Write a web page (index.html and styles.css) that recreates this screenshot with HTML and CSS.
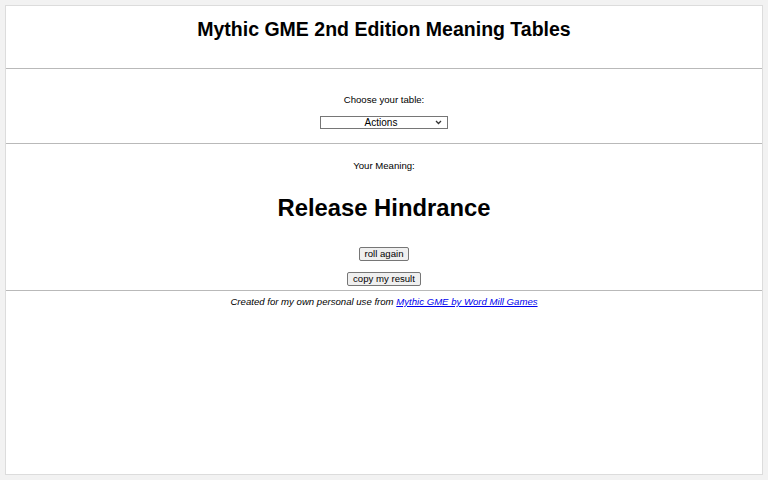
FILE: index.html
```html
<!DOCTYPE html>
<html>
<head>
<meta charset="UTF-8">
<title>Mythic GME Meaning Tables</title>
<link rel="stylesheet" href="styles.css">
</head>
<body>
<div id="wrap">
	<!-- 제목 -->
	<div class="head">
		<h1>Mythic GME 2nd Edition Meaning Tables</h1>
	</div>

	<!-- 테이블 선택 -->
	<div class="pick">
		<p class="small">Choose your table:</p>
		<select id="table">
			<option>Actions</option>
			<option>Descriptions</option>
			<option>Characters</option>
			<option>Locations</option>
		</select>
	</div>

	<!-- 결과 -->
	<div class="result">
		<p class="small">Your Meaning:</p>
		<h2 id="meaning">Release Hindrance</h2>
		<button type="button" class="stbtn">roll again</button>
		<button type="button" class="stbtn">copy my result</button>
	</div>

	<div class="foot">
		Created for my own personal use from <a href="#">Mythic GME by Word Mill Games</a>
	</div>
</div>
</body>
</html>
```

FILE: styles.css
```css
html{
	background: #f2f2f2;
}
body{
	margin: 5px;
	font-family: "Liberation Sans", Arial, sans-serif;
	color: black;
}

#wrap{
	background: white;
	border: 1px solid #dcdcdc;
	height: 468px;
	text-align: center;
}

.head{
	height: 61px;
	border-bottom: 1px solid #b9b9b9;
	padding-top: 1px;
}
h1{
	font-size: 19.5px;
	margin: 11px 0 0 0;
}

.pick{
	height: 73px;
	border-bottom: 1px solid #b9b9b9;
	padding-top: 1px;
}
.small{
	font-size: 9.6px;
	margin: 24px 0 7px 0;
}
#table{
	-webkit-appearance: none;
	appearance: none;
	width: 128px;
	height: 13px;
	font-family: "Liberation Sans", Arial, sans-serif;
	font-size: 10px;
	line-height: 11px;
	padding: 0 6px 0 0;
	text-align: center;
	text-align-last: center;
	color: black;
	border: 1px solid #767676;
	border-radius: 0;
	background: white url("data:image/svg+xml,%3Csvg xmlns='http://www.w3.org/2000/svg' width='7' height='5'%3E%3Cpath d='M1 1l2.5 2.5L6 1' fill='none' stroke='%23333' stroke-width='1.3'/%3E%3C/svg%3E") no-repeat right 5px center;
}

.result{
	height: 145px;
	border-bottom: 1px solid #b9b9b9;
	padding-top: 1px;
}
.result .small{
	margin: 15px 0 0 0;
}
h2{
	font-size: 23.8px;
	margin: 23px 0 25px 0;
}
.stbtn{
	display: block;
	margin: 0 auto 11px auto;
	font-family: "Liberation Sans", Arial, sans-serif;
	font-size: 9.6px;
	line-height: 10px;
	padding: 1px 5px;
	border: 1px solid #767676;
	border-radius: 2px;
	background: #efefef;
	cursor: pointer;
}

.foot{
	font-size: 9.6px;
	font-style: italic;
	padding-top: 5px;
}
.foot a{
	color: #0000ee;
}
```
